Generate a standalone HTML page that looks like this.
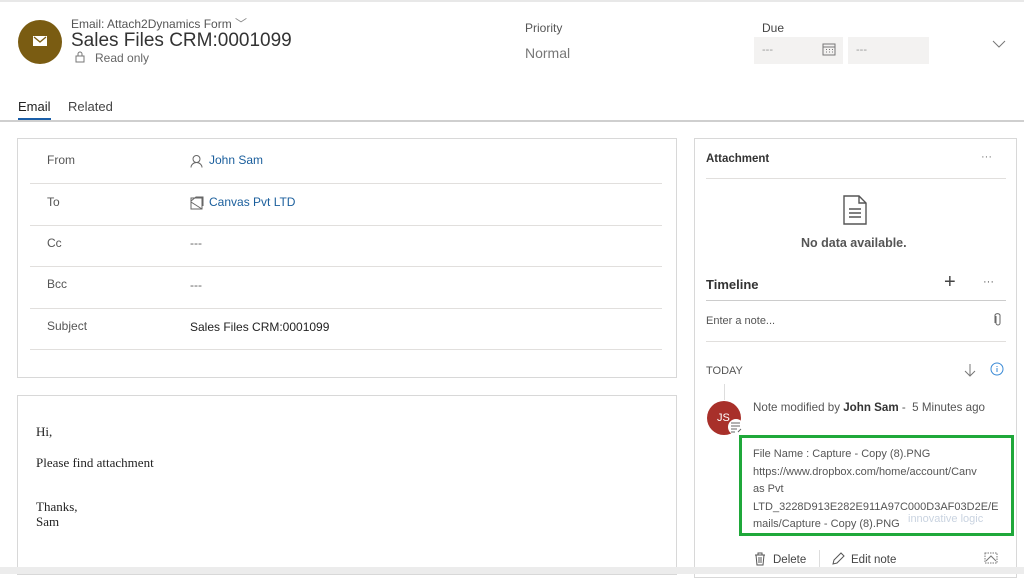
<!DOCTYPE html>
<html><head><style>
*{margin:0;padding:0;box-sizing:border-box}
body{width:1024px;height:574px;background:#fff;font-family:"Liberation Sans",sans-serif;position:relative;overflow:hidden;color:#333}
.a{position:absolute;white-space:nowrap}
.hl{position:absolute;height:1px;background:#e1dfdd}
</style></head><body>
<div class="a" style="left:0;top:0;width:1024px;height:2px;background:#e8e8e8"></div>
<div class="a" style="left:18px;top:20px;width:44px;height:44px;border-radius:50%;background:#7a5c12"></div>
<svg class="a" style="left:33px;top:35px" width="14" height="12" viewBox="0 0 14 12"><rect x="0" y="1" width="14" height="10" fill="#fff"/><path d="M1 2 L7 7 L13 2" stroke="#7a5c12" stroke-width="1.3" fill="none"/></svg>
<div class="a" style="left:71px;top:16px;font-size:12px;line-height:16px;color:#555">Email: Attach2Dynamics Form <span style="color:#888">﹀</span></div>
<div class="a" style="left:71px;top:31px;font-size:19px;line-height:20px;color:#333">Sales Files CRM:0001099</div>
<svg class="a" style="left:75px;top:51px" width="10" height="12" viewBox="0 0 10 12"><rect x="1" y="5" width="8" height="6" fill="none" stroke="#777"/><path d="M3 5V3a2 2 0 0 1 4 0v2" fill="none" stroke="#777"/></svg>
<div class="a" style="left:95px;top:51px;font-size:12px;color:#666">Read only</div>
<div class="a" style="left:525px;top:21px;font-size:12px;color:#555">Priority</div>
<div class="a" style="left:525px;top:45px;font-size:14px;color:#777">Normal</div>
<div class="a" style="left:762px;top:21px;font-size:12px;color:#444">Due</div>
<div class="a" style="left:754px;top:37px;width:89px;height:27px;background:#f3f2f1"></div>
<div class="a" style="left:762px;top:44px;font-size:11px;color:#999">---</div>
<svg class="a" style="left:822px;top:43px" width="14" height="13" viewBox="0 0 14 13"><rect x="1" y="1" width="12" height="11" fill="none" stroke="#777"/><path d="M1 4h12M4 6.5h1M7 6.5h1M10 6.5h1M4 9h1M7 9h1M10 9h1" stroke="#777"/></svg>
<div class="a" style="left:848px;top:37px;width:81px;height:27px;background:#f3f2f1"></div>
<div class="a" style="left:856px;top:44px;font-size:11px;color:#999">---</div>
<svg class="a" style="left:992px;top:40px" width="14" height="9" viewBox="0 0 14 9"><path d="M1 1l6 6 6-6" stroke="#777" fill="none"/></svg>
<div class="a" style="left:18px;top:99px;font-size:13px;color:#222">Email</div>
<div class="a" style="left:18px;top:118px;width:33px;height:3px;background:#1a5ea8"></div>
<div class="a" style="left:68px;top:99px;font-size:13px;color:#444">Related</div>
<div class="a" style="left:0;top:120px;width:1024px;height:2px;background:#cfcfcf"></div>

<div class="a" style="left:17px;top:138px;width:660px;height:240px;border:1px solid #d8d8d8"></div>
<div class="a" style="left:47px;top:153px;font-size:12px;color:#555">From</div>
<svg class="a" style="left:190px;top:154px" width="13" height="14" viewBox="0 0 13 14"><circle cx="6.5" cy="5" r="3.5" fill="none" stroke="#666"/><path d="M1 13.5a5.5 5 0 0 1 11 0" fill="none" stroke="#666"/></svg>
<div class="a" style="left:209px;top:153px;font-size:12px;color:#1a5e9c">John Sam</div>
<div class="hl" style="left:30px;top:183px;width:632px"></div>
<div class="a" style="left:47px;top:195px;font-size:12px;color:#555">To</div>
<svg class="a" style="left:190px;top:196px" width="14" height="14" viewBox="0 0 14 14"><rect x="1" y="2" width="11" height="11" fill="none" stroke="#666"/><path d="M1 5L6 1h7v9" fill="none" stroke="#666"/><path d="M1 6l11 7" stroke="#666"/></svg>
<div class="a" style="left:209px;top:195px;font-size:12px;color:#1a5e9c">Canvas Pvt LTD</div>
<div class="hl" style="left:30px;top:225px;width:632px"></div>
<div class="a" style="left:47px;top:236px;font-size:12px;color:#555">Cc</div>
<div class="a" style="left:190px;top:236px;font-size:12px;color:#666">---</div>
<div class="hl" style="left:30px;top:266px;width:632px"></div>
<div class="a" style="left:47px;top:277px;font-size:12px;color:#555">Bcc</div>
<div class="a" style="left:190px;top:278px;font-size:12px;color:#666">---</div>
<div class="hl" style="left:30px;top:308px;width:632px"></div>
<div class="a" style="left:47px;top:319px;font-size:12px;color:#555">Subject</div>
<div class="a" style="left:190px;top:320px;font-size:12px;color:#222">Sales Files CRM:0001099</div>
<div class="hl" style="left:30px;top:349px;width:632px"></div>

<div class="a" style="left:17px;top:395px;width:660px;height:180px;border:1px solid #d8d8d8"></div>
<div class="a" style="left:36px;top:424px;font-family:'Liberation Serif',serif;font-size:13px;color:#222;line-height:15px">Hi,</div>
<div class="a" style="left:36px;top:455px;font-family:'Liberation Serif',serif;font-size:13px;color:#222">Please find attachment</div>
<div class="a" style="left:36px;top:499px;font-family:'Liberation Serif',serif;font-size:13px;color:#222;line-height:15px">Thanks,<br>Sam</div>

<div class="a" style="left:694px;top:138px;width:323px;height:440px;border:1px solid #d8d8d8"></div>
<div class="a" style="left:706px;top:153px;font-size:11.5px;font-weight:bold;color:#333">Attachment</div>
<div class="a" style="left:981px;top:151px;font-size:11px;color:#777">···</div>
<div class="hl" style="left:706px;top:178px;width:300px"></div>
<svg class="a" style="left:842px;top:195px" width="26" height="30" viewBox="0 0 26 30"><path d="M2 1h15l7 7v21H2z" fill="none" stroke="#555" stroke-width="1.4"/><path d="M17 1v7h7M7 14h12M7 18h12M7 22h12" fill="none" stroke="#555" stroke-width="1.4"/></svg>
<div class="a" style="left:801px;top:236px;font-size:12.5px;font-weight:bold;color:#555">No data available.</div>
<div class="a" style="left:706px;top:277px;font-size:13px;font-weight:bold;color:#333">Timeline</div>
<div class="a" style="left:944px;top:271px;font-size:20px;font-weight:300;color:#444">+</div>
<div class="a" style="left:983px;top:276px;font-size:11px;color:#555">···</div>
<div class="hl" style="left:706px;top:300px;width:300px;background:#ccc"></div>
<div class="a" style="left:706px;top:315px;font-size:11px;color:#555">Enter a note...</div>
<svg class="a" style="left:994px;top:312px" width="8" height="15" viewBox="0 0 8 15"><path d="M2 4v7a2 2 0 0 0 4 0V3a3 3 0 0 0-5 0v8" fill="none" stroke="#666"/></svg>
<div class="hl" style="left:706px;top:341px;width:300px"></div>
<div class="a" style="left:706px;top:365px;font-size:11px;color:#555">TODAY</div>
<svg class="a" style="left:964px;top:363px" width="12" height="14" viewBox="0 0 12 14"><path d="M6 1v12M1 8l5 5 5-5" fill="none" stroke="#777"/></svg>
<svg class="a" style="left:990px;top:362px" width="14" height="14" viewBox="0 0 14 14"><circle cx="7" cy="7" r="6" fill="none" stroke="#3a8ad6"/><path d="M7 6v4M7 4v1" stroke="#3a8ad6"/></svg>
<div class="a" style="left:724px;top:384px;width:1px;height:16px;background:#ddd"></div>
<div class="a" style="left:707px;top:401px;width:34px;height:34px;border-radius:50%;background:#a8302a"></div>
<div class="a" style="left:717px;top:412px;font-size:11px;color:#fff">JS</div>
<div class="a" style="left:728px;top:419px;width:16px;height:16px;border-radius:50%;background:#fff"></div>
<svg class="a" style="left:730px;top:421px" width="12" height="12" viewBox="0 0 12 12"><path d="M1 2h9M1 5h9M1 8h6M1 11h4M8 11l3-3" stroke="#666"/></svg>
<div class="a" style="left:753px;top:401px;font-size:11.6px;color:#555">Note modified by <b style="color:#333">John Sam</b> -&nbsp; 5 Minutes ago</div>
<div class="a" style="left:739px;top:435px;width:275px;height:101px;border:3px solid #1fa83a"></div>
<div class="a" style="left:753px;top:446px;font-size:11px;line-height:17.5px;color:#555">File Name : Capture - Copy (8).PNG<br>https://www.dropbox.com/home/account/Canv<br>as Pvt<br>LTD_3228D913E282E911A97C000D3AF03D2E/E<br>mails/Capture - Copy (8).PNG</div>
<div class="a" style="left:908px;top:513px;font-size:11px;color:#c9d3e0">innovative logic</div>
<svg class="a" style="left:754px;top:552px" width="12" height="14" viewBox="0 0 12 14"><path d="M1 3h10M4 3V1h4v2M2 3l1 10h6l1-10" fill="none" stroke="#555"/><path d="M5 5v6M7 5v6" stroke="#555"/></svg>
<div class="a" style="left:773px;top:554px;font-size:11.5px;color:#444">Delete</div>
<div class="a" style="left:819px;top:550px;width:1px;height:20px;background:#ddd"></div>
<svg class="a" style="left:832px;top:552px" width="13" height="13" viewBox="0 0 13 13"><path d="M1 12l1-4 7-7 3 3-7 7z" fill="none" stroke="#555"/></svg>
<div class="a" style="left:851px;top:554px;font-size:11.5px;color:#444">Edit note</div>
<svg class="a" style="left:984px;top:552px" width="14" height="12" viewBox="0 0 14 12"><rect x="1" y="1" width="12" height="10" fill="none" stroke="#777" stroke-dasharray="1.5 1"/><path d="M2 9l5-5 5 5" fill="none" stroke="#777"/></svg>
<div class="a" style="left:0;top:567px;width:1024px;height:7px;background:#ececec"></div>
</body></html>
